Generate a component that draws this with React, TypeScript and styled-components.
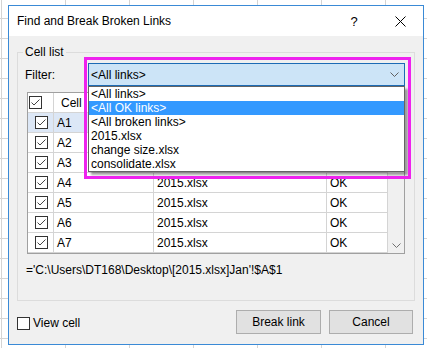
import React from 'react'
import styled, { createGlobalStyle } from 'styled-components'

const GlobalStyle = createGlobalStyle`
  html, body {
    margin: 0;
    height: 100%;
  }
  body {
    font-family: "Liberation Sans", Arial, sans-serif;
    font-size: 12px;
    color: #000;
    overflow: hidden;
    background-color: #fff;
    background-image:
      linear-gradient(to right, #d4d4d4 1px, transparent 1px),
      linear-gradient(to bottom, #d4d4d4 1px, transparent 1px);
    background-size: 64px 20px;
    background-position: 1px 18px;
  }
`

const Page = styled.div`
  padding: 5px 0 0 8px;
`

const Dialog = styled.div`
  width: 416px;
  height: 340px;
  box-sizing: border-box;
  border: 1px solid #3a8ad6;
  background: #f0f0f0;
  display: flex;
  flex-direction: column;
`

const TitleBar = styled.div`
  height: 30px;
  background: #fff;
  display: flex;
  align-items: center;
  padding-left: 8px;
`

const Title = styled.div`
  flex: 1;
`

const TitleButton = styled.div`
  width: 46px;
  height: 30px;
  display: flex;
  align-items: center;
  justify-content: center;
  font-size: 13px;
`

const Body = styled.div`
  flex: 1;
  padding: 8px 8px 0;
`

const GroupBox = styled.fieldset`
  margin: 0;
  min-width: 0;
  padding: 0 8px 22px 7px;
  border: 1px solid #dcdcdc;
`

const Legend = styled.legend`
  padding: 0 2px;
  margin-left: -2px;
  line-height: 16px;
`

const FilterRow = styled.div`
  display: flex;
  align-items: center;
  height: 23px;
  margin-top: 3px;
`

const FilterLabel = styled.div`
  width: 63px;
`

const ComboWrap = styled.div`
  position: relative;
  width: 317px;
  height: 23px;
`

const Combo = styled.div`
  box-sizing: border-box;
  height: 23px;
  border: 1px solid #1c6bb5;
  background: #cce4f7;
  display: flex;
  align-items: center;
  justify-content: space-between;
  padding: 0 5px 0 2px;
`

const DropList = styled.div`
  position: absolute;
  top: 23px;
  left: 0;
  width: 317px;
  box-sizing: border-box;
  border: 1px solid #646464;
  background: #fff;
  box-shadow: 3px 3px 2px rgba(0, 0, 0, 0.35);
  z-index: 2;
`

const DropItem = styled.div<{ $active?: boolean }>`
  height: 14px;
  line-height: 14px;
  padding-left: 2px;
  background: ${(p) => (p.$active ? '#3399ff' : 'transparent')};
  color: ${(p) => (p.$active ? '#fff' : '#000')};
`

const Marker = styled.div`
  position: absolute;
  left: -4px;
  top: -6px;
  width: 327px;
  height: 122px;
  box-sizing: border-box;
  border: 3px solid #ee22ee;
  z-index: 3;
  pointer-events: none;
`

const ListView = styled.div`
  margin: 6px 0 0 2px;
  width: 378px;
  height: 162px;
  box-sizing: border-box;
  border: 1px solid #a0a0a0;
  background: #fff;
  display: flex;
  overflow: hidden;
`

const Grid = styled.div`
  flex: none;
  width: 360px;
  display: grid;
  grid-template-columns: 26px 100px 173px 61px;
  grid-auto-rows: 20px;
`

const Cell = styled.div<{ $pad?: number; $selected?: boolean }>`
  box-sizing: border-box;
  border-right: 1px solid #d4d4d4;
  border-bottom: 1px solid #d4d4d4;
  padding-left: ${(p) => p.$pad ?? 3}px;
  display: flex;
  align-items: center;
  white-space: nowrap;
  overflow: hidden;
  background: ${(p) => (p.$selected ? '#dce7f6' : 'transparent')};
`

const ScrollBar = styled.div`
  flex: 1;
  background: #f0f0f0;
  display: flex;
  flex-direction: column;
  justify-content: flex-end;
  align-items: center;
  padding-bottom: 5px;
`

const Formula = styled.div`
  margin-top: 8px;
  padding-left: 1px;
  line-height: 16px;
`

const Footer = styled.div`
  display: flex;
  align-items: center;
  height: 24px;
  margin-top: 9px;
  padding-right: 2px;
`

const ViewCell = styled.label`
  flex: 1;
  display: flex;
  align-items: center;
  gap: 3px;
  padding-top: 2px;
`

const Buttons = styled.div`
  display: flex;
  gap: 8px;
`

const Button = styled.button<{ $w: number }>`
  width: ${(p) => p.$w}px;
  height: 24px;
  border: 1px solid #adadad;
  background: #e1e1e1;
  font: inherit;
  color: #000;
  padding: 0;
`

const Box = styled.span`
  width: 13px;
  height: 13px;
  box-sizing: border-box;
  border: 1px solid #333;
  background: #fff;
  display: inline-flex;
  align-items: center;
  justify-content: center;
`

const CheckBox = ({ checked }: { checked?: boolean }) => (
  <Box>
    {checked && (
      <svg width="11" height="11" viewBox="0 0 11 11">
        <path d="M1.5 5.5 L4 8 L9.5 2.5" fill="none" stroke="#444" strokeWidth="1" />
      </svg>
    )}
  </Box>
)

const Chevron = ({ color = '#606060' }: { color?: string }) => (
  <svg width="9" height="5" viewBox="0 0 9 5">
    <path d="M0.5 0.5 L4.5 4.5 L8.5 0.5" fill="none" stroke={color} strokeWidth="1" />
  </svg>
)

const filterOptions = [
  '<All links>',
  '<All OK links>',
  '<All broken links>',
  '2015.xlsx',
  'change size.xlsx',
  'consolidate.xlsx',
]

const rows = ['A1', 'A2', 'A3', 'A4', 'A5', 'A6', 'A7']

export default function App() {
  return (
    <Page>
      <GlobalStyle />
      <Dialog>
        <TitleBar>
          <Title>Find and Break Broken Links</Title>
          <TitleButton>?</TitleButton>
          <TitleButton>
            <svg width="11" height="11" viewBox="0 0 11 11">
              <path d="M0.5 0.5 L10.5 10.5 M10.5 0.5 L0.5 10.5" stroke="#000" strokeWidth="1" />
            </svg>
          </TitleButton>
        </TitleBar>
        <Body>
          <GroupBox>
            <Legend>Cell list</Legend>
            <FilterRow>
              <FilterLabel>Filter:</FilterLabel>
              <ComboWrap>
                <Combo>
                  <span>&lt;All links&gt;</span>
                  <Chevron />
                </Combo>
                <DropList>
                  {filterOptions.map((o, i) => (
                    <DropItem key={o} $active={i === 1}>{o}</DropItem>
                  ))}
                </DropList>
                <Marker />
              </ComboWrap>
            </FilterRow>
            <ListView>
              <Grid>
                <Cell $pad={1}><CheckBox checked /></Cell>
                <Cell $pad={7}>Cell</Cell>
                <Cell />
                <Cell />
                {rows.map((r, i) => (
                  <React.Fragment key={r}>
                    <Cell $pad={7} $selected={i === 0}><CheckBox checked /></Cell>
                    <Cell $selected={i === 0}>{r}</Cell>
                    <Cell $selected={i === 0}>2015.xlsx</Cell>
                    <Cell $selected={i === 0}>OK</Cell>
                  </React.Fragment>
                ))}
              </Grid>
              <ScrollBar>
                <Chevron color="#707070" />
              </ScrollBar>
            </ListView>
            <Formula>='C:\Users\DT168\Desktop\[2015.xlsx]Jan'!$A$1</Formula>
          </GroupBox>
          <Footer>
            <ViewCell>
              <CheckBox />
              View cell
            </ViewCell>
            <Buttons>
              <Button $w={85}>Break link</Button>
              <Button $w={84}>Cancel</Button>
            </Buttons>
          </Footer>
        </Body>
      </Dialog>
    </Page>
  )
}
